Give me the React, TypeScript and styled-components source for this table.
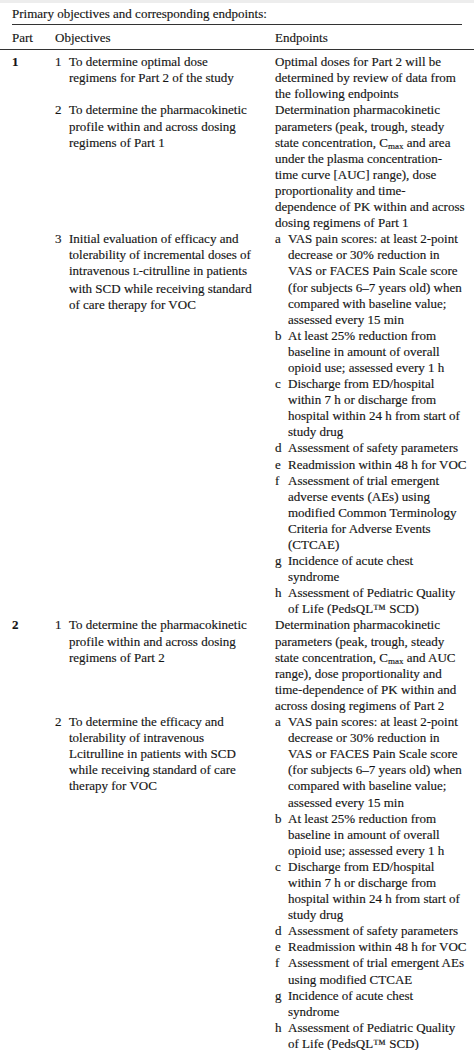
import React from 'react';
import styled, { createGlobalStyle } from 'styled-components';

const GlobalStyle = createGlobalStyle`
  html, body {
    margin: 0;
    padding: 0;
    background: #ffffff;
  }
  body {
    font-family: 'Liberation Serif', 'Times New Roman', serif;
    font-size: 13px;
    color: #151515;
    -webkit-text-stroke: 0.15px #151515;
  }
`;

const Page = styled.div`
  width: 474px;
  box-sizing: border-box;
  border-top: 3px solid #ededed;
  padding-top: 3px;
  line-height: 16.1px;
`;

const Title = styled.div`
  margin: 0 12px;
  padding-bottom: 2px;
  border-bottom: 1px solid #333333;
`;

const HeaderRow = styled.div`
  display: grid;
  grid-template-columns: 43px 220px 1fr;
  padding: 5px 0 3px 12px;
  border-bottom: 1.5px solid #333333;
`;

const Body = styled.div`
  padding: 4px 0 0 12px;
`;

const PartRow = styled.div`
  display: flex;
`;

const PartCell = styled.div`
  width: 43px;
  flex: none;
  font-weight: bold;
`;

const ObjectiveList = styled.div`
  flex: 1;
  display: flex;
  flex-direction: column;
`;

const ObjectiveRow = styled.div`
  display: grid;
  grid-template-columns: 220px 1fr;
`;

const Item = styled.div<{ $indent: number }>`
  display: grid;
  grid-template-columns: ${(p) => p.$indent}px 1fr;
`;

const Marker = styled.span``;

const Lines = styled.div``;

const Line = styled.span`
  display: block;
  white-space: nowrap;
`;

const Sub = styled.sub`
  font-size: 9px;
  line-height: 0;
  vertical-align: -2px;
`;

const SmallCap = styled.span`
  font-size: 9.5px;
`;

const Cmax = () => (
  <>
    C<Sub>max</Sub>
  </>
);

type Text = React.ReactNode[];

interface Endpoint {
  letter?: string;
  lines: Text;
}

interface Objective {
  num: string;
  lines: Text;
  endpoints: Endpoint[];
}

interface Part {
  part: string;
  objectives: Objective[];
}

const vasLines: Text = [
  'VAS pain scores: at least 2-point',
  'decrease or 30% reduction in',
  'VAS or FACES Pain Scale score',
  '(for subjects 6–7 years old) when',
  'compared with baseline value;',
  'assessed every 15 min',
];

const opioidLines: Text = [
  'At least 25% reduction from',
  'baseline in amount of overall',
  'opioid use; assessed every 1 h',
];

const dischargeLines: Text = [
  'Discharge from ED/hospital',
  'within 7 h or discharge from',
  'hospital within 24 h from start of',
  'study drug',
];

const parts: Part[] = [
  {
    part: '1',
    objectives: [
      {
        num: '1',
        lines: ['To determine optimal dose', 'regimens for Part 2 of the study'],
        endpoints: [
          {
            lines: [
              'Optimal doses for Part 2 will be',
              'determined by review of data from',
              'the following endpoints',
            ],
          },
        ],
      },
      {
        num: '2',
        lines: [
          'To determine the pharmacokinetic',
          'profile within and across dosing',
          'regimens of Part 1',
        ],
        endpoints: [
          {
            lines: [
              'Determination pharmacokinetic',
              'parameters (peak, trough, steady',
              <>
                state concentration, <Cmax /> and area
              </>,
              'under the plasma concentration-',
              'time curve [AUC] range), dose',
              'proportionality and time-',
              'dependence of PK within and across',
              'dosing regimens of Part 1',
            ],
          },
        ],
      },
      {
        num: '3',
        lines: [
          'Initial evaluation of efficacy and',
          'tolerability of incremental doses of',
          <>
            intravenous <SmallCap>L</SmallCap>-citrulline in patients
          </>,
          'with SCD while receiving standard',
          'of care therapy for VOC',
        ],
        endpoints: [
          { letter: 'a', lines: vasLines },
          { letter: 'b', lines: opioidLines },
          { letter: 'c', lines: dischargeLines },
          { letter: 'd', lines: ['Assessment of safety parameters'] },
          { letter: 'e', lines: ['Readmission within 48 h for VOC'] },
          {
            letter: 'f',
            lines: [
              'Assessment of trial emergent',
              'adverse events (AEs) using',
              'modified Common Terminology',
              'Criteria for Adverse Events',
              '(CTCAE)',
            ],
          },
          { letter: 'g', lines: ['Incidence of acute chest', 'syndrome'] },
          { letter: 'h', lines: ['Assessment of Pediatric Quality', 'of Life (PedsQL™ SCD)'] },
        ],
      },
    ],
  },
  {
    part: '2',
    objectives: [
      {
        num: '1',
        lines: [
          'To determine the pharmacokinetic',
          'profile within and across dosing',
          'regimens of Part 2',
        ],
        endpoints: [
          {
            lines: [
              'Determination pharmacokinetic',
              'parameters (peak, trough, steady',
              <>
                state concentration, <Cmax /> and AUC
              </>,
              'range), dose proportionality and',
              'time-dependence of PK within and',
              'across dosing regimens of Part 2',
            ],
          },
        ],
      },
      {
        num: '2',
        lines: [
          'To determine the efficacy and',
          'tolerability of intravenous',
          'Lcitrulline in patients with SCD',
          'while receiving standard of care',
          'therapy for VOC',
        ],
        endpoints: [
          { letter: 'a', lines: vasLines },
          { letter: 'b', lines: opioidLines },
          { letter: 'c', lines: dischargeLines },
          { letter: 'd', lines: ['Assessment of safety parameters'] },
          { letter: 'e', lines: ['Readmission within 48 h for VOC'] },
          { letter: 'f', lines: ['Assessment of trial emergent AEs', 'using modified CTCAE'] },
          { letter: 'g', lines: ['Incidence of acute chest', 'syndrome'] },
          { letter: 'h', lines: ['Assessment of Pediatric Quality', 'of Life (PedsQL™ SCD)'] },
        ],
      },
    ],
  },
];

const TextLines: React.FC<{ lines: Text }> = ({ lines }) => (
  <Lines>
    {lines.map((l, i) => (
      <Line key={i}>{l}</Line>
    ))}
  </Lines>
);

const App: React.FC = () => {
  return (
    <>
      <GlobalStyle />
      <Page>
        <Title>Primary objectives and corresponding endpoints:</Title>
        <HeaderRow>
          <span>Part</span>
          <span>Objectives</span>
          <span>Endpoints</span>
        </HeaderRow>
        <Body>
          {parts.map((p) => (
            <PartRow key={p.part}>
              <PartCell>{p.part}</PartCell>
              <ObjectiveList>
                {p.objectives.map((o) => (
                  <ObjectiveRow key={o.num}>
                    <Item $indent={14}>
                      <Marker>{o.num}</Marker>
                      <TextLines lines={o.lines} />
                    </Item>
                    <div>
                      {o.endpoints.map((e, i) =>
                        e.letter ? (
                          <Item key={i} $indent={13}>
                            <Marker>{e.letter}</Marker>
                            <TextLines lines={e.lines} />
                          </Item>
                        ) : (
                          <TextLines key={i} lines={e.lines} />
                        )
                      )}
                    </div>
                  </ObjectiveRow>
                ))}
              </ObjectiveList>
            </PartRow>
          ))}
        </Body>
      </Page>
    </>
  );
};

export default App;
